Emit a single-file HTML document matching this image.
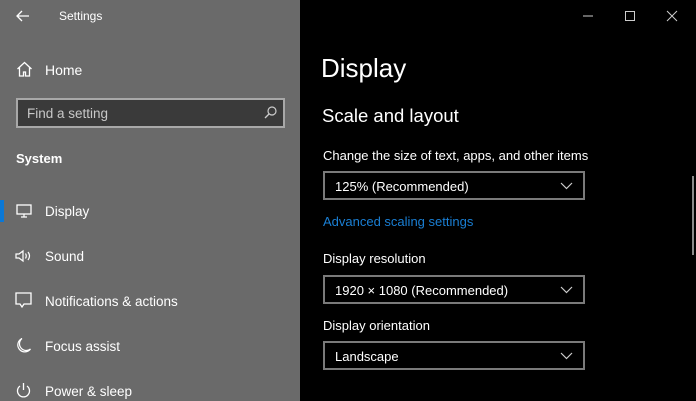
<!DOCTYPE html>
<html><head><style>
*{margin:0;padding:0;box-sizing:border-box}
body{width:696px;height:401px;overflow:hidden;background:#000;font-family:"Liberation Sans",sans-serif;position:relative}
.side{position:absolute;left:0;top:0;width:300px;height:401px;background:#6a6a6a;color:#fff}
.t{position:absolute;white-space:nowrap}
.dd{position:absolute;left:323px;width:262px;height:29px;border:2px solid #7a7a7a;color:#fff;font-size:13px;padding:6px 0 0 10px}
.dd svg{position:absolute;right:10px;top:9px}
svg.i{position:absolute}
</style></head><body>
<div class="side">
<svg class="i" style="left:16px;top:10px" width="14" height="12" viewBox="0 0 14 12"><path d="M13 6H1M6 1L1 6l5 5" stroke="#fff" stroke-width="1.3" fill="none"/></svg>
<div class="t" style="left:59px;top:9px;font-size:12px">Settings</div>
<svg class="i" style="left:16px;top:61px" width="17" height="16" viewBox="0 0 17 16"><path d="M1.5 8L8.5 1.5 15.5 8M3.5 6.5V15h4v-4h2v4h4V6.5" stroke="#fff" stroke-width="1.3" fill="none"/></svg>
<div class="t" style="left:45px;top:62px;font-size:14px">Home</div>
<div style="position:absolute;left:16px;top:98px;width:269px;height:30px;background:#3a3a3a;border:2px solid #a8a8a8"></div>
<div class="t" style="left:27px;top:106px;font-size:13.5px;color:#c8c8c8">Find a setting</div>
<svg class="i" style="left:264px;top:106px" width="13" height="13" viewBox="0 0 13 13"><circle cx="8" cy="5" r="4" stroke="#ccc" stroke-width="1.2" fill="none"/><path d="M5 8L1 12" stroke="#ccc" stroke-width="1.3"/></svg>
<div class="t" style="left:16px;top:151px;font-size:13px;font-weight:bold">System</div>
<div style="position:absolute;left:0;top:200px;width:4px;height:22px;background:#0a78d7"></div>
<svg class="i" style="left:16px;top:204px" width="16" height="14" viewBox="0 0 16 14"><rect x="1" y="1" width="14" height="9" stroke="#fff" stroke-width="1.3" fill="none"/><path d="M8 10v3M5 13h6" stroke="#fff" stroke-width="1.2"/></svg>
<div class="t" style="left:45px;top:204px;font-size:13.5px">Display</div>
<svg class="i" style="left:15px;top:249px" width="17" height="14" viewBox="0 0 17 14"><path d="M1 5h3l4-3v10L4 9H1z" stroke="#fff" stroke-width="1.2" fill="none"/><path d="M10.5 4.5q1.5 2.5 0 5M13 3q3 4 0 8" stroke="#fff" stroke-width="1.2" fill="none"/></svg>
<div class="t" style="left:45px;top:249px;font-size:13.5px">Sound</div>
<svg class="i" style="left:15px;top:292px" width="17" height="17" viewBox="0 0 17 17"><path d="M1 1h15v11H9l-2 3-2-3H1z" stroke="#fff" stroke-width="1.3" fill="none"/></svg>
<div class="t" style="left:45px;top:294px;font-size:13.5px">Notifications &amp; actions</div>
<svg class="i" style="left:16px;top:337px" width="16" height="17" viewBox="0 0 16 17"><path d="M6 1.5A7 7 0 1 0 14.5 12 6.5 6.5 0 0 1 6 1.5z" stroke="#fff" stroke-width="1.2" fill="none"/></svg>
<div class="t" style="left:45px;top:339px;font-size:13.5px">Focus assist</div>
<svg class="i" style="left:15px;top:382px" width="17" height="17" viewBox="0 0 17 17"><path d="M5 4a6 6 0 1 0 7 0" stroke="#fff" stroke-width="1.3" fill="none"/><path d="M8.5 1v7" stroke="#fff" stroke-width="1.3"/></svg>
<div class="t" style="left:45px;top:384px;font-size:13.5px">Power &amp; sleep</div>
</div>
<svg class="i" style="left:583px;top:10px" width="100" height="12" viewBox="0 0 100 12"><path d="M0 6h10" stroke="#ccc"/><rect x="42.5" y="1.5" width="9" height="9" stroke="#ccc" fill="none"/><path d="M84 1l10 10M94 1L84 11" stroke="#ccc"/></svg>
<div class="t" style="left:321px;top:53px;font-size:26px;color:#fff">Display</div>
<div class="t" style="left:322px;top:105px;font-size:18.5px;color:#fff">Scale and layout</div>
<div class="t" style="left:323px;top:148px;font-size:13px;color:#fff">Change the size of text, apps, and other items</div>
<div class="dd" style="top:171px">125% (Recommended)<svg width="13" height="8" viewBox="0 0 13 8"><path d="M1 1l5.5 5.5L12 1" stroke="#ccc" stroke-width="1.2" fill="none"/></svg></div>
<div class="t" style="left:323px;top:214px;font-size:13px;color:#1a7fd4">Advanced scaling settings</div>
<div class="t" style="left:323px;top:251px;font-size:13px;color:#fff">Display resolution</div>
<div class="dd" style="top:275px">1920 × 1080 (Recommended)<svg width="13" height="8" viewBox="0 0 13 8"><path d="M1 1l5.5 5.5L12 1" stroke="#ccc" stroke-width="1.2" fill="none"/></svg></div>
<div class="t" style="left:323px;top:318px;font-size:13px;color:#fff">Display orientation</div>
<div class="dd" style="top:341px">Landscape<svg width="13" height="8" viewBox="0 0 13 8"><path d="M1 1l5.5 5.5L12 1" stroke="#ccc" stroke-width="1.2" fill="none"/></svg></div>
<div style="position:absolute;left:692px;top:176px;width:2px;height:79px;background:#8a8a8a"></div>
</body></html>
